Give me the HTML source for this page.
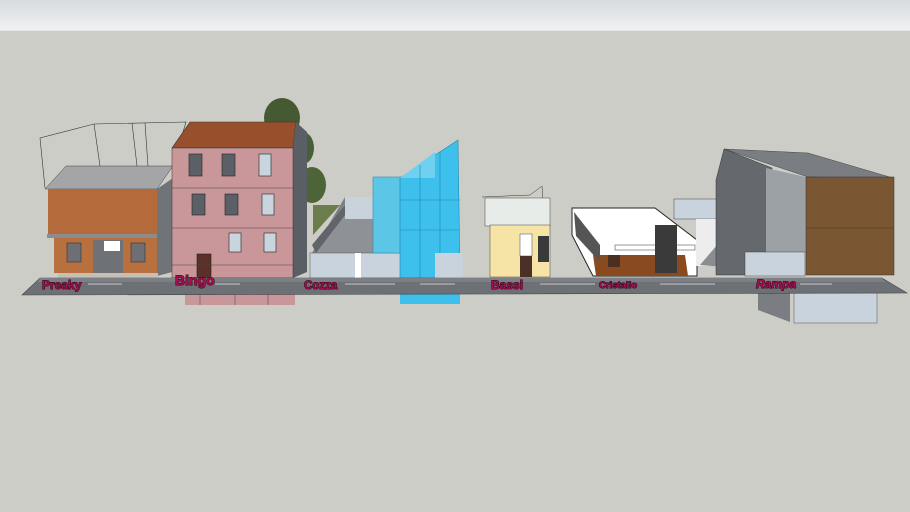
<!DOCTYPE html>
<html><head><meta charset="utf-8"><style>
html,body{margin:0;padding:0;width:910px;height:512px;overflow:hidden;background:#cdcdc8}
svg{display:block}
text{font-family:"Liberation Sans",sans-serif;font-weight:900;fill:#a3104f;stroke:#3a0018;stroke-width:1;paint-order:stroke}
</style></head><body>
<svg width="910" height="512" viewBox="0 0 910 512" xmlns="http://www.w3.org/2000/svg">
<defs><linearGradient id="sky" x1="0" y1="0" x2="0" y2="1"><stop offset="0" stop-color="#d6dbde"/><stop offset="1" stop-color="#f1f2f3"/></linearGradient></defs>
<rect width="910" height="512" fill="#cdcdc8"/>
<rect width="910" height="30" fill="url(#sky)"/>
<rect y="30" width="910" height="1" fill="#e6e7e8"/>

<!-- tree -->
<ellipse cx="282" cy="118" rx="18" ry="20" fill="#455a33"/>
<ellipse cx="312" cy="185" rx="14" ry="18" fill="#4d6338"/>
<ellipse cx="303" cy="148" rx="11" ry="16" fill="#47603a"/>

<!-- Preaky -->
<g stroke="#333" stroke-width="0.6" fill="none">
<polyline points="45,188 40,138 94,124 186,122 173,166"/>
<line x1="94" y1="124" x2="100" y2="166"/><line x1="132" y1="123" x2="137" y2="166"/><line x1="145" y1="123" x2="148" y2="166"/>
</g>
<polygon points="45,189 157,189 173,166 66,166" fill="#a4a5a6" stroke="#444" stroke-width="0.5"/>
<polygon points="157,189 173,178 180,178 180,270 157,276" fill="#707478"/>
<rect x="48" y="189" width="109" height="47" fill="#b46a3a"/>
<rect x="47" y="234" width="110" height="4" fill="#8a8c8e"/>
<rect x="54" y="238" width="103" height="35" fill="#b8703e"/>
<rect x="67" y="243" width="14" height="19" fill="#6c7074" stroke="#333" stroke-width="0.6"/>
<rect x="93" y="240" width="30" height="37" fill="#6e7276"/><rect x="104" y="241" width="16" height="10" fill="#fff"/>
<rect x="131" y="243" width="14" height="19" fill="#6c7074" stroke="#333" stroke-width="0.6"/>
<rect x="58" y="273" width="100" height="5" fill="#c6bfb5"/>

<!-- Bingo -->
<polygon points="172,148 293,148 296,122 190,122" fill="#98502c" stroke="#333" stroke-width="0.6"/>
<polygon points="293,148 296,122 307,132 307,272 293,278" fill="#5a5f65"/>
<rect x="172" y="148" width="121" height="130" fill="#c9979a" stroke="#333" stroke-width="0.5"/>
<rect x="185" y="278" width="110" height="27" fill="#c9979a"/>
<g stroke="#444" stroke-width="0.5"><line x1="200" y1="278" x2="200" y2="305"/><line x1="235" y1="278" x2="235" y2="305"/><line x1="268" y1="278" x2="268" y2="305"/></g>
<g fill="#5b6067" stroke="#222" stroke-width="0.6">
<rect x="189" y="154" width="13" height="22"/><rect x="222" y="154" width="13" height="22"/><rect x="259" y="154" width="12" height="22" fill="#c8d4de"/>
<rect x="192" y="194" width="13" height="21"/><rect x="225" y="194" width="13" height="21"/><rect x="262" y="194" width="12" height="21" fill="#c8d4de"/>
<rect x="229" y="233" width="12" height="19" fill="#c8d4de"/><rect x="264" y="233" width="12" height="19" fill="#c8d4de"/>
<rect x="197" y="254" width="14" height="24" fill="#5a3028"/>
</g>
<g stroke="#444" stroke-width="0.5"><line x1="172" y1="188" x2="293" y2="188"/><line x1="172" y1="228" x2="293" y2="228"/><line x1="172" y1="265" x2="293" y2="265"/></g>

<!-- Cozza -->
<polygon points="312,253 345,197 420,197 420,253" fill="#7d8186"/>
<polygon points="316,253 345,203 402,203 402,253" fill="#8e9196"/>
<rect x="345" y="197" width="28" height="22" fill="#c8d3dc"/>
<polygon points="312,245 345,205 345,215 316,253" fill="#61656a"/>
<polygon points="313,205 340,205 313,235" fill="#6b7d4a"/>
<rect x="310" y="253" width="112" height="25" fill="#c9d3dd" stroke="#555" stroke-width="0.5"/>
<rect x="355" y="253" width="6" height="25" fill="#fff"/>
<rect x="373" y="177" width="28" height="76" fill="#5cc6e6" stroke="#2a8fb0" stroke-width="0.6"/>
<polygon points="400,178 458,140 460,278 400,278" fill="#3ec0ec" stroke="#1e86ad" stroke-width="0.6"/>
<polygon points="400,178 435,152 435,178" fill="#6fd0f0"/>
<g stroke="#1e86ad" stroke-width="0.6"><line x1="400" y1="200" x2="460" y2="200"/><line x1="400" y1="230" x2="460" y2="230"/><line x1="420" y1="165" x2="420" y2="278"/><line x1="440" y1="152" x2="440" y2="278"/></g>
<rect x="435" y="253" width="28" height="25" fill="#c9d3dd"/>
<rect x="400" y="292" width="60" height="12" fill="#3ec0ec"/>

<!-- Bassi -->
<polyline points="482,197 530,195 542,186 544,216" fill="none" stroke="#333" stroke-width="0.5"/>
<rect x="485" y="198" width="65" height="28" fill="#e8ece8" stroke="#444" stroke-width="0.5"/>
<rect x="490" y="225" width="60" height="52" fill="#f6e4a7" stroke="#444" stroke-width="0.5"/>
<rect x="520" y="234" width="12" height="22" fill="#fff" stroke="#444" stroke-width="0.5"/>
<rect x="520" y="256" width="12" height="21" fill="#4a3028"/>
<rect x="538" y="236" width="11" height="26" fill="#3a3a3a"/>

<!-- Cristallo -->
<polygon points="572,208 655,208 697,240 697,276 593,276 572,235" fill="#fff" stroke="#222" stroke-width="1"/>
<polygon points="593,255 685,255 688,276 596,276" fill="#8a4a20"/>
<polygon points="574,212 600,245 600,262 576,236" fill="#555"/>
<rect x="615" y="245" width="80" height="5" fill="#fff" stroke="#333" stroke-width="0.5"/>
<rect x="655" y="225" width="22" height="48" fill="#3a3a3a"/>
<rect x="608" y="255" width="12" height="12" fill="#4a3020"/>

<!-- Rampa -->
<rect x="674" y="199" width="45" height="20" fill="#c9d3dd" stroke="#444" stroke-width="0.5"/>
<polygon points="716,219 696,219 696,266 716,266" fill="#ededed"/>
<polygon points="700,265 730,230 760,270" fill="#8a8d90"/>
<polygon points="724,149 808,153 893,178 808,177" fill="#7a7e82" stroke="#444" stroke-width="0.5"/>
<polygon points="724,149 772,168 772,275 716,275 716,180" fill="#65696e" stroke="#333" stroke-width="0.5"/>
<polygon points="766,168 806,177 806,252 766,252" fill="#9ca1a6"/>
<rect x="806" y="177" width="88" height="98" fill="#7a5632" stroke="#333" stroke-width="0.5"/>
<line x1="806" y1="228" x2="894" y2="228" stroke="#4a3520" stroke-width="0.6"/>
<rect x="745" y="252" width="60" height="24" fill="#c9d3dd" stroke="#444" stroke-width="0.5"/>
<polygon points="758,292 790,292 790,322 758,310" fill="#7a7e82"/>
<rect x="794" y="292" width="83" height="31" fill="#c9d3dd" stroke="#555" stroke-width="0.5"/>

<!-- road -->
<polygon points="40,278 882,278 907,293 22,295" fill="#6d7175" stroke="#444" stroke-width="0.6"/>
<polygon points="40,278 882,278 885,282 37,282" fill="#7c8084"/>
<g stroke="#c4c6c8" stroke-width="1">
<line x1="88" y1="284" x2="122" y2="284"/><line x1="215" y1="284" x2="240" y2="284"/><line x1="345" y1="284" x2="395" y2="284"/><line x1="420" y1="284" x2="455" y2="284"/><line x1="540" y1="284" x2="595" y2="284"/><line x1="660" y1="284" x2="715" y2="284"/><line x1="800" y1="284" x2="832" y2="284"/>
</g>

<!-- labels -->
<text x="42" y="289" font-size="12">Preaky</text>
<text x="175" y="285" font-size="14">Bingo</text>
<text x="304" y="289" font-size="11.5">Cozza</text>
<text x="491" y="289" font-size="12">Bassi</text>
<text x="599" y="288" font-size="9.5">Cristallo</text>
<text x="756" y="288" font-size="12" font-style="italic">Rampa</text>
</svg>
</body></html>
